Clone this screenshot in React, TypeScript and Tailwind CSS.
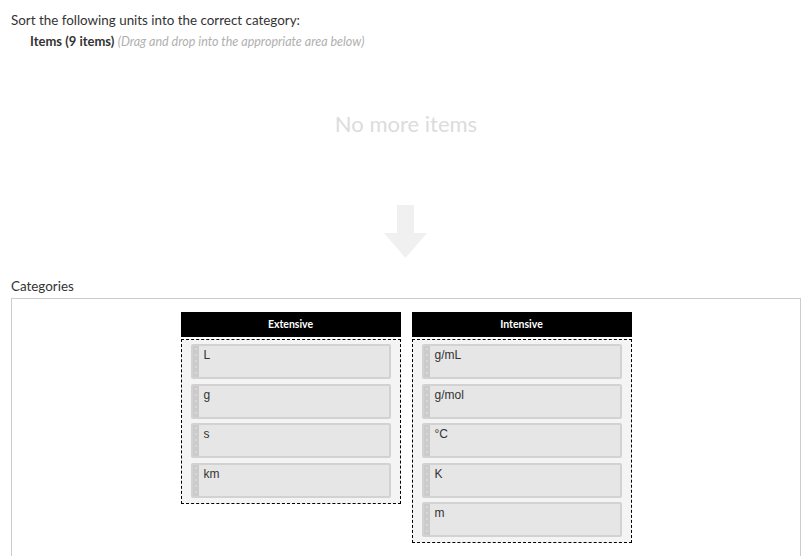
import React from 'react'

const extensive = ['L', 'g', 's', 'km']
const intensive = ['g/mL', 'g/mol', '°C', 'K', 'm']

function Item({ label }: { label: string }) {
  return (
    <div className="flex h-[35px] rounded-[2px] border-2 border-[#d2d2d2] bg-[#e6e6e6]">
      <div className="w-[6px] shrink-0 bg-[#cbcbcb] bg-[radial-gradient(#d8d8d8_1px,transparent_1px)] bg-[length:6px_6px]" />
      <span className="pl-[5px] pt-[2px] text-[12px] leading-[14px] text-[#333] [font-family:'Liberation_Sans',Arial,sans-serif]">
        {label}
      </span>
    </div>
  )
}

function Column({ title, items }: { title: string; items: string[] }) {
  return (
    <div className="flex w-[220px] flex-col">
      <div className="flex h-[25px] items-center justify-center bg-black text-[10.5px] font-bold text-white">
        {title}
      </div>
      <div className="mt-[2px] flex flex-col gap-[4.5px] border border-dashed border-black bg-[#f4f4f4] px-[9px] pb-[5px] pt-[4px]">
        {items.map(i => (
          <Item key={i} label={i} />
        ))}
      </div>
    </div>
  )
}

export default function App() {
  return (
    <div className="flex w-[803px] flex-col bg-white pl-[11px] pr-[2px] text-[13.4px] text-[#333] [font-family:Lato,'Open_Sans',sans-serif]">
      <p className="mt-[11px] leading-[18px]">Sort the following units into the correct category:</p>
      <p className="mt-[3px] pl-[19px] leading-[18px]">
        <span className="text-[13px] font-bold">Items (9 items)</span>{' '}
        <span className="text-[12.5px] italic text-[#b0b0b0]">(Drag and drop into the appropriate area below)</span>
      </p>

      <div className="flex flex-col items-center">
        <p className="mt-[60px] text-[22px] leading-[26px] text-[#dcdcdc]">No more items</p>
        <svg className="mt-[68px]" width="44" height="54" viewBox="0 0 44 54">
          <polygon points="13,0 30,0 30,28 43,28 21.5,53 0,28 13,28" fill="#f0f0f0" />
        </svg>
      </div>

      <p className="mt-[18px] leading-[18px]">Categories</p>
      <div className="mt-[3px] flex justify-center gap-[11px] border border-[#cccccc] pb-[13px] pt-[13px]">
        <Column title="Extensive" items={extensive} />
        <Column title="Intensive" items={intensive} />
      </div>
    </div>
  )
}
